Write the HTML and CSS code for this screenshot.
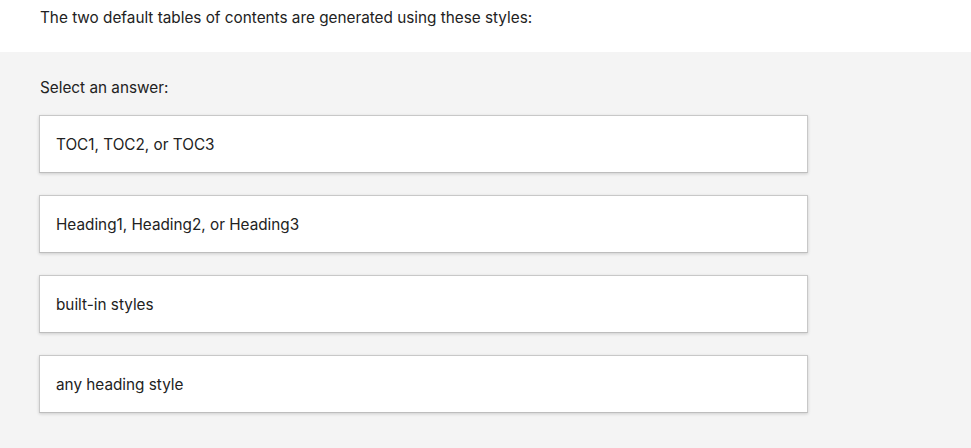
FILE: index.html
```html
<!DOCTYPE html>
<html>
<head>
<meta charset="utf-8">
<link rel="stylesheet" href="styles.css">
</head>
<body>
<div class="question">The two default tables of contents are generated using these styles:</div>
<div class="answers">
  <div class="prompt">Select an answer:</div>
  <div class="list">
    <div class="option">TOC1, TOC2, or TOC3</div>
    <div class="option">Heading1, Heading2, or Heading3</div>
    <div class="option">built-in styles</div>
    <div class="option">any heading style</div>
  </div>
</div>
</body>
</html>
```
FILE: styles.css
```css
html, body {
  margin: 0;
  padding: 0;
  background: #f4f4f4;
  font-family: Inter, "Noto Sans", sans-serif;
  color: #222;
}
.question {
  background: #fff;
  height: 52px;
  box-sizing: border-box;
  padding: 9px 0 0 40px;
  font-size: 15.3px;
  line-height: 18px;
}
.answers {
  padding: 27px 0 40px 39px;
}
.prompt {
  font-size: 15.3px;
  line-height: 18px;
  margin-bottom: 18px;
  padding-left: 1px;
}
.list {
  display: flex;
  flex-direction: column;
  gap: 22px;
}
.option {
  box-sizing: border-box;
  width: 769px;
  height: 58px;
  background: #fff;
  border: 1px solid #c8c8c8;
  border-bottom-color: #bdbdbd;
  box-shadow: 0 1px 3px rgba(0,0,0,0.16);
  display: flex;
  align-items: center;
  padding: 1px 0 0 16px;
  font-size: 15.3px;
}
```
